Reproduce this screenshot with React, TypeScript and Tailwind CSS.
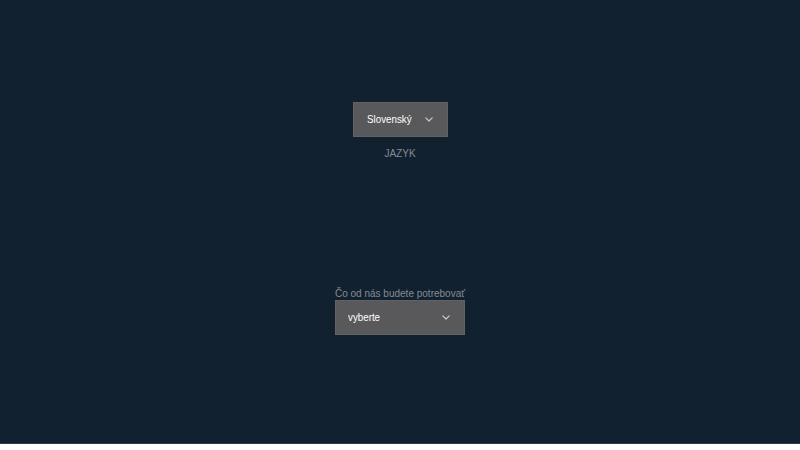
import React from "react";

function Chevron() {
  return (
    <svg width="8" height="5" viewBox="0 0 8 5" fill="none">
      <path d="M0.8 0.8 L4 4 L7.2 0.8" stroke="#c9c9cb" strokeWidth="1.2" strokeLinecap="round" strokeLinejoin="round" />
    </svg>
  );
}

export default function App() {
  return (
    <div className="w-[800px] h-[450px] bg-white" style={{ fontFamily: '"Liberation Sans", Arial, sans-serif' }}>
      <div className="h-[444px] bg-[#12212f] border-b border-[#2e3f4b] flex flex-col items-center pt-[102px]">
        <div className="h-[35px] w-[95px] bg-[#59595b] border border-[#626264] flex items-center justify-between pl-[13px] pr-[14px]">
          <span className="inline-block origin-left scale-x-[0.85] text-[11.5px] leading-none text-white">Slovenský</span>
          <Chevron />
        </div>
        <div className="mt-[10px] text-[10px] leading-[13px] text-[#848b95]">JAZYK</div>
        <div className="mt-[127px] flex flex-col w-[130px]">
          <div className="text-[10px] leading-[13px] text-[#848b95] whitespace-nowrap">Čo od nás budete potrebovať</div>
          <div className="h-[35px] w-[130px] bg-[#59595b] border border-[#626264] flex items-center justify-between pl-[12px] pr-[14px]">
            <span className="inline-block origin-left scale-x-[0.85] text-[11.5px] leading-none text-white">vyberte</span>
            <Chevron />
          </div>
        </div>
      </div>
    </div>
  );
}
